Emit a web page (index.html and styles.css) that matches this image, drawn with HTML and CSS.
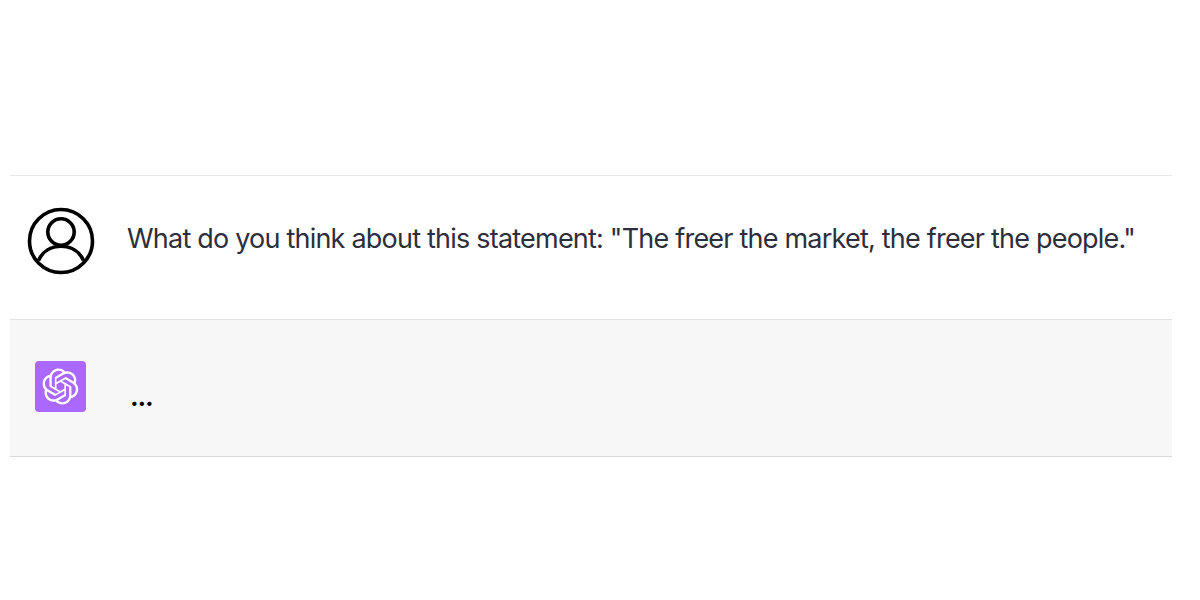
FILE: index.html
```html
<!DOCTYPE html>
<html lang="en">
<head>
<meta charset="utf-8">
<title>Chat</title>
<link rel="stylesheet" href="styles.css">
</head>
<body>
<main class="thread">
  <section class="row row-user">
    <svg class="avatar" viewBox="0 0 68 68" aria-hidden="true">
      <circle cx="34" cy="34" r="31.5"/>
      <circle cx="34" cy="25" r="13.2"/>
      <path d="M11.500 53.500C15.500 44.500 24 39.200 34 39.200S52.500 44.500 56.500 53.500"/>
    </svg>
    <p class="message">What do you think about this statement: "The freer the market, the freer the people."</p>
  </section>
  <section class="row row-bot">
    <div class="logo">
      <svg viewBox="0 0 41 41" aria-hidden="true"><path d="M37.5324 16.8707C37.9808 15.5241 38.1363 14.0974 37.9886 12.6859C37.8409 11.2744 37.3934 9.91076 36.676 8.68622C35.6126 6.83404 33.9882 5.3676 32.0373 4.4985C30.0864 3.62941 27.9098 3.40259 25.8215 3.85078C24.8796 2.7893 23.7219 1.94125 22.4257 1.36341C21.1295 0.785575 19.7249 0.491269 18.3058 0.500197C16.1708 0.495044 14.0893 1.16803 12.3614 2.42214C10.6335 3.67624 9.34853 5.44666 8.6917 7.47815C7.30085 7.76286 5.98686 8.3414 4.8377 9.17505C3.68854 10.0087 2.73073 11.0782 2.02839 12.312C0.956464 14.1591 0.498905 16.2988 0.721698 18.4228C0.944492 20.5467 1.83612 22.5449 3.268 24.1293C2.81966 25.4759 2.66413 26.9026 2.81182 28.3141C2.95951 29.7256 3.40701 31.0892 4.12437 32.3138C5.18791 34.1659 6.8123 35.6322 8.76321 36.5013C10.7141 37.3704 12.8907 37.5973 14.9789 37.1492C15.9208 38.2107 17.0786 39.0587 18.3747 39.6366C19.6709 40.2144 21.0755 40.5087 22.4946 40.4998C24.6307 40.5054 26.7133 39.8321 28.4418 38.5772C30.1704 37.3223 31.4556 35.5506 32.1119 33.5179C33.5027 33.2332 34.8167 32.6547 35.9659 31.821C37.115 30.9874 38.0728 29.9178 38.7752 28.684C39.8458 26.8371 40.3023 24.6979 40.0789 22.5748C39.8556 20.4517 38.9639 18.4544 37.5324 16.8707ZM22.4978 37.8849C20.7443 37.8874 19.0459 37.2733 17.6994 36.1501C17.7601 36.117 17.8666 36.0586 17.936 36.0161L25.9004 31.4156C26.1003 31.3019 26.2663 31.137 26.3813 30.9378C26.4964 30.7386 26.5563 30.5124 26.5549 30.2825V19.0542L29.9213 20.998C29.9389 21.0068 29.9541 21.0198 29.9656 21.0359C29.977 21.052 29.9842 21.0707 29.9867 21.0902V30.3889C29.9842 32.375 29.1946 34.2791 27.7909 35.6841C26.3872 37.0892 24.4838 37.8806 22.4978 37.8849ZM6.39227 31.0064C5.51397 29.4888 5.19742 27.7107 5.49804 25.9832C5.55718 26.0187 5.66048 26.0818 5.73461 26.1244L13.699 30.7248C13.8975 30.8408 14.1233 30.902 14.3532 30.902C14.583 30.902 14.8088 30.8408 15.0073 30.7248L24.731 25.1103V28.9979C24.7321 29.0177 24.7283 29.0376 24.7199 29.0556C24.7115 29.0736 24.6988 29.0893 24.6829 29.1012L16.6317 33.7497C14.9096 34.7416 12.8643 35.0097 10.9447 34.4954C9.02506 33.9811 7.38785 32.7263 6.39227 31.0064ZM4.29707 13.6194C5.17156 12.0998 6.55279 10.9364 8.19885 10.3327C8.19885 10.4013 8.19491 10.5228 8.19491 10.6071V19.808C8.19351 20.0378 8.25334 20.2638 8.36823 20.4629C8.48312 20.6619 8.64893 20.8267 8.84863 20.9404L18.5723 26.5542L15.206 28.4979C15.1894 28.5089 15.1703 28.5155 15.1505 28.5173C15.1307 28.5191 15.1107 28.516 15.0924 28.5082L7.04046 23.8557C5.32135 22.8601 4.06716 21.2235 3.55289 19.3046C3.03862 17.3858 3.30624 15.3413 4.29707 13.6194ZM31.955 20.0556L22.2312 14.4411L25.5976 12.4981C25.6142 12.4872 25.6333 12.4805 25.6531 12.4787C25.6729 12.4769 25.6928 12.4801 25.7111 12.4879L33.7631 17.1364C34.9967 17.849 36.0017 18.8982 36.6606 20.1613C37.3194 21.4244 37.6047 22.849 37.4832 24.2684C37.3617 25.6878 36.8382 27.0432 35.9743 28.1759C35.1103 29.3086 33.9415 30.1717 32.6047 30.6641C32.6047 30.5947 32.6047 30.4733 32.6047 30.3889V21.188C32.6066 20.9586 32.5474 20.7328 32.4332 20.5338C32.319 20.3348 32.154 20.1698 31.955 20.0556ZM35.3055 15.0128C35.2464 14.9765 35.1431 14.9142 35.069 14.8717L27.1045 10.2712C26.906 10.1554 26.6803 10.0943 26.4504 10.0943C26.2206 10.0943 25.9948 10.1554 25.7963 10.2712L16.0726 15.8858V11.9982C16.0715 11.9783 16.0753 11.9585 16.0837 11.9405C16.0921 11.9225 16.1048 11.9068 16.1207 11.8949L24.1719 7.25025C25.4053 6.53903 26.8158 6.19376 28.2383 6.25482C29.6608 6.31589 31.0364 6.78077 32.2044 7.59508C33.3723 8.40939 34.2842 9.53945 34.8334 10.8531C35.3826 12.1667 35.5464 13.6095 35.3055 15.0128ZM14.2424 21.9419L10.8752 19.9981C10.8576 19.9893 10.8423 19.9763 10.8309 19.9602C10.8195 19.9441 10.8122 19.9254 10.8098 19.9058V10.6071C10.8107 9.18295 11.2173 7.78848 11.9819 6.58696C12.7466 5.38544 13.8377 4.42659 15.1275 3.82264C16.4173 3.21869 17.8524 2.99464 19.2649 3.1767C20.6775 3.35876 22.0089 3.93941 23.1034 4.85067C23.0427 4.88379 22.937 4.94215 22.8668 4.98473L14.9024 9.58517C14.7025 9.69878 14.5366 9.86356 14.4215 10.0626C14.3065 10.2616 14.2466 10.4877 14.2479 10.7175L14.2424 21.9419ZM16.071 17.9991L20.4018 15.4978L24.7325 17.9975V22.9985L20.4018 25.4983L16.071 22.9985V17.9991Z"/></svg>
    </div>
    <p class="dots">...</p>
  </section>
</main>
</body>
</html>
```
FILE: styles.css
```css
html, body {
  margin: 0;
  background: #fff;
}
body {
  padding: 175px 28px 0 10px;
  height: 600px;
  box-sizing: border-box;
  overflow: hidden;
  font-family: Inter, "Liberation Sans", sans-serif;
}
.thread {
  display: flex;
  flex-direction: column;
}
.row {
  display: flex;
  box-sizing: border-box;
}
.row-user {
  height: 144px;
  border-top: 1px solid #e8e8e8;
  align-items: flex-start;
  padding: 31px 0 0 17px;
  gap: 32px;
}
.row-bot {
  height: 138px;
  background: #f7f7f7;
  border-top: 1px solid #e2e2e2;
  border-bottom: 1px solid #d9d9d9;
  padding: 41px 0 0 25px;
  gap: 44px;
}
.avatar {
  width: 68px;
  height: 68px;
  flex: none;
  fill: none;
  stroke: #000;
  stroke-width: 3.6;
}
.message {
  margin: 0;
  padding-top: 14px;
  font-size: 27px;
  line-height: 36px;
  letter-spacing: -0.785px;
  color: #2d2e3c;
  white-space: nowrap;
}
.logo {
  width: 51px;
  height: 51px;
  flex: none;
  background: #ab68ff;
  border-radius: 4px;
  display: flex;
  align-items: center;
  justify-content: center;
}
.logo svg {
  width: 37px;
  height: 37px;
  fill: #fff;
}
.dots {
  margin: 0;
  padding-top: 18px;
  font-size: 26px;
  line-height: 36px;
  font-weight: 700;
  letter-spacing: -1.2px;
  color: #000;
}
```
